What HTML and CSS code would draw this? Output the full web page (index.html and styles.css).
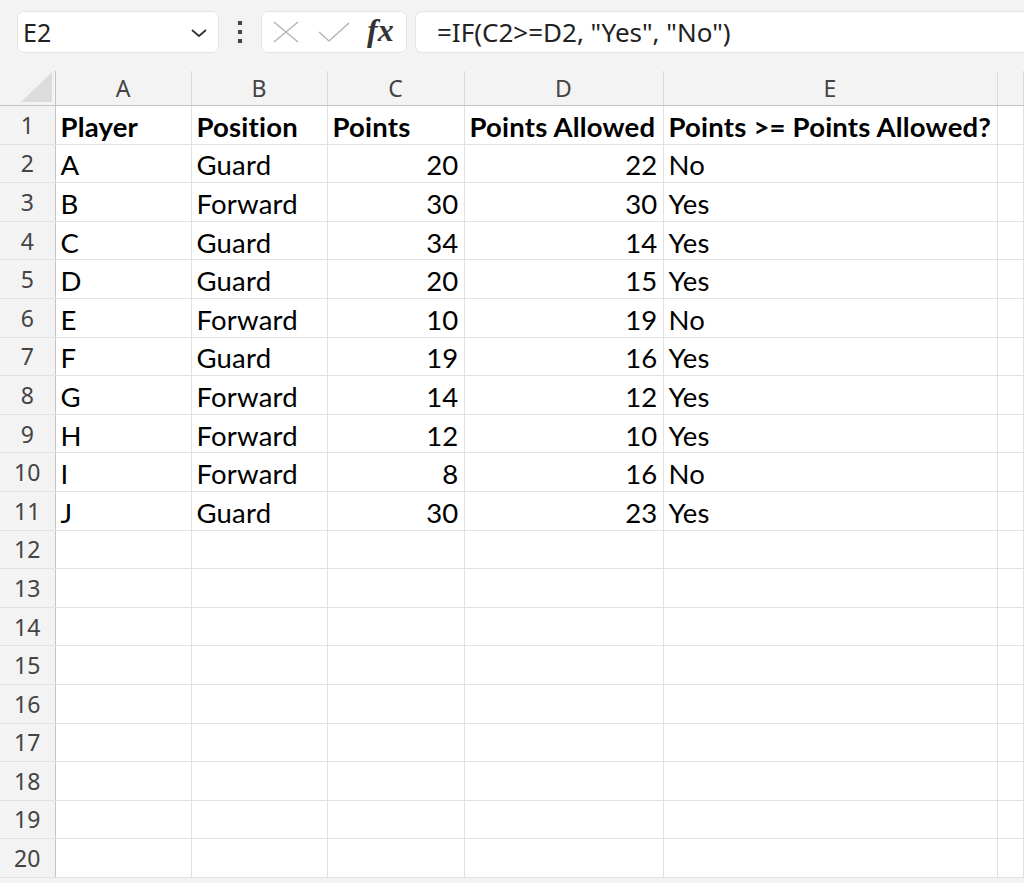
FILE: index.html
```html
<!DOCTYPE html>
<html lang="en">
<head>
    <meta charset="UTF-8">
    <meta name="viewport" content="width=device-width, initial-scale=1.0">
    <title>Sheet1 - Excel</title>
    <link rel="stylesheet" href="styles.css">
</head>
<body>
    <!-- Formula bar -->
    <div class="formula-bar">
        <div class="name-box">
            <span>E2</span>
            <svg class="chevron" width="18" height="10" viewBox="0 0 18 10">
                <path d="M2 2 L9 8 L16 2" fill="none" stroke="#333" stroke-width="1.8"/>
            </svg>
        </div>
        <div class="grip">
            <span></span><span></span><span></span>
        </div>
        <div class="fx-box">
            <svg width="28" height="24" viewBox="0 0 28 24">
                <path d="M2 2 L26 22 M26 2 L2 22" stroke="#b8b8b8" stroke-width="1.6"/>
            </svg>
            <svg width="34" height="24" viewBox="0 0 34 24">
                <path d="M2 12 L12 21 L32 3" fill="none" stroke="#b8b8b8" stroke-width="1.6"/>
            </svg>
            <span class="fx">fx</span>
        </div>
        <div class="formula-input">=IF(C2&gt;=D2, "Yes", "No")</div>
    </div>

    <!-- Grid -->
    <table class="sheet">
        <colgroup>
            <col class="col-head">
            <col style="width:136px">
            <col style="width:136px">
            <col style="width:137px">
            <col style="width:199px">
            <col style="width:334px">
            <col>
        </colgroup>
        <thead>
            <tr>
                <th class="corner"><div class="triangle"></div></th>
                <th>A</th><th>B</th><th>C</th><th>D</th><th>E</th><th></th>
            </tr>
        </thead>
        <tbody>
            <tr class="bold"><th>1</th><td>Player</td><td>Position</td><td>Points</td><td>Points Allowed</td><td>Points &gt;= Points Allowed?</td><td></td></tr>
            <tr><th>2</th><td>A</td><td>Guard</td><td class="num">20</td><td class="num">22</td><td>No</td><td></td></tr>
            <tr><th>3</th><td>B</td><td>Forward</td><td class="num">30</td><td class="num">30</td><td>Yes</td><td></td></tr>
            <tr><th>4</th><td>C</td><td>Guard</td><td class="num">34</td><td class="num">14</td><td>Yes</td><td></td></tr>
            <tr><th>5</th><td>D</td><td>Guard</td><td class="num">20</td><td class="num">15</td><td>Yes</td><td></td></tr>
            <tr><th>6</th><td>E</td><td>Forward</td><td class="num">10</td><td class="num">19</td><td>No</td><td></td></tr>
            <tr><th>7</th><td>F</td><td>Guard</td><td class="num">19</td><td class="num">16</td><td>Yes</td><td></td></tr>
            <tr><th>8</th><td>G</td><td>Forward</td><td class="num">14</td><td class="num">12</td><td>Yes</td><td></td></tr>
            <tr><th>9</th><td>H</td><td>Forward</td><td class="num">12</td><td class="num">10</td><td>Yes</td><td></td></tr>
            <tr><th>10</th><td>I</td><td>Forward</td><td class="num">8</td><td class="num">16</td><td>No</td><td></td></tr>
            <tr><th>11</th><td>J</td><td>Guard</td><td class="num">30</td><td class="num">23</td><td>Yes</td><td></td></tr>
            <tr><th>12</th><td></td><td></td><td></td><td></td><td></td><td></td></tr>
            <tr><th>13</th><td></td><td></td><td></td><td></td><td></td><td></td></tr>
            <tr><th>14</th><td></td><td></td><td></td><td></td><td></td><td></td></tr>
            <tr><th>15</th><td></td><td></td><td></td><td></td><td></td><td></td></tr>
            <tr><th>16</th><td></td><td></td><td></td><td></td><td></td><td></td></tr>
            <tr><th>17</th><td></td><td></td><td></td><td></td><td></td><td></td></tr>
            <tr><th>18</th><td></td><td></td><td></td><td></td><td></td><td></td></tr>
            <tr><th>19</th><td></td><td></td><td></td><td></td><td></td><td></td></tr>
            <tr><th>20</th><td></td><td></td><td></td><td></td><td></td><td></td></tr>
        </tbody>
    </table>
</body>
</html>
```

FILE: styles.css
```css
body {
    margin: 0;
    padding: 0;
    background-color: #f3f3f3;
    font-family: "Noto Sans", sans-serif;
    overflow: hidden;
}

.formula-bar {
    display: flex;
    align-items: flex-start;
    height: 64px;
    padding: 11px 0 0 17px;
    box-sizing: border-box;
}

.name-box,
.fx-box,
.formula-input {
    height: 42px;
    box-sizing: border-box;
    background-color: white;
    border: 1px solid #e3e3e3;
    border-radius: 7px;
    display: flex;
    align-items: center;
}

.name-box {
    width: 202px;
    padding: 0 10px 0 5px;
    justify-content: space-between;
    font-size: 25px;
    color: #222;
}

.chevron {
    margin-top: 2px;
}

.grip {
    width: 42px;
    height: 42px;
    display: flex;
    flex-direction: column;
    align-items: center;
    justify-content: center;
    gap: 5px;
}

.grip span {
    width: 4px;
    height: 4px;
    background-color: #444;
}

.fx-box {
    width: 146px;
    padding: 0 8px 0 10px;
    gap: 17px;
}

.fx {
    font-family: "Liberation Serif", serif;
    font-style: italic;
    font-weight: bold;
    font-size: 32px;
    color: #333;
    margin-top: -4px;
    margin-left: -1px;
}

.formula-input {
    flex: 1;
    margin-left: 8px;
    padding-left: 21px;
    font-size: 26px;
    color: #222;
    border-right: none;
    border-radius: 7px 0 0 7px;
}

/* sheet */
.sheet {
    border-collapse: collapse;
    table-layout: fixed;
    width: 100%;
    margin-top: 7px;
}

.col-head {
    width: 55px;
}

.sheet thead th {
    height: 34px;
    padding: 0;
    font-weight: normal;
    font-size: 23px;
    color: #444;
    background-color: #f3f3f3;
    border-right: 1px solid #dadada;
    border-bottom: 1px solid #c4c4c4;
}

.sheet thead th.corner {
    border-right: 1px solid #c4c4c4;
    position: relative;
}

.triangle {
    position: absolute;
    right: 3px;
    bottom: 3px;
    width: 0;
    height: 0;
    border-left: 31px solid transparent;
    border-bottom: 30px solid #dcdcdc;
}

.sheet tbody th {
    height: 37.6px;
    padding: 0;
    font-weight: normal;
    font-size: 23px;
    color: #444;
    background-color: #f3f3f3;
    border-right: 1px solid #c4c4c4;
    border-bottom: 1px solid #e1e1e1;
}

.sheet td {
    padding: 3px 5px 0 5px;
    background-color: white;
    border-right: 1px solid #e1e1e1;
    border-bottom: 1px solid #e1e1e1;
    font-family: Lato, sans-serif;
    font-size: 27.5px;
    letter-spacing: 0.2px;
    color: #000;
    white-space: nowrap;
    overflow: hidden;
}

.sheet td.num {
    text-align: right;
}

.sheet tr.bold td {
    font-weight: 700;
}
```
